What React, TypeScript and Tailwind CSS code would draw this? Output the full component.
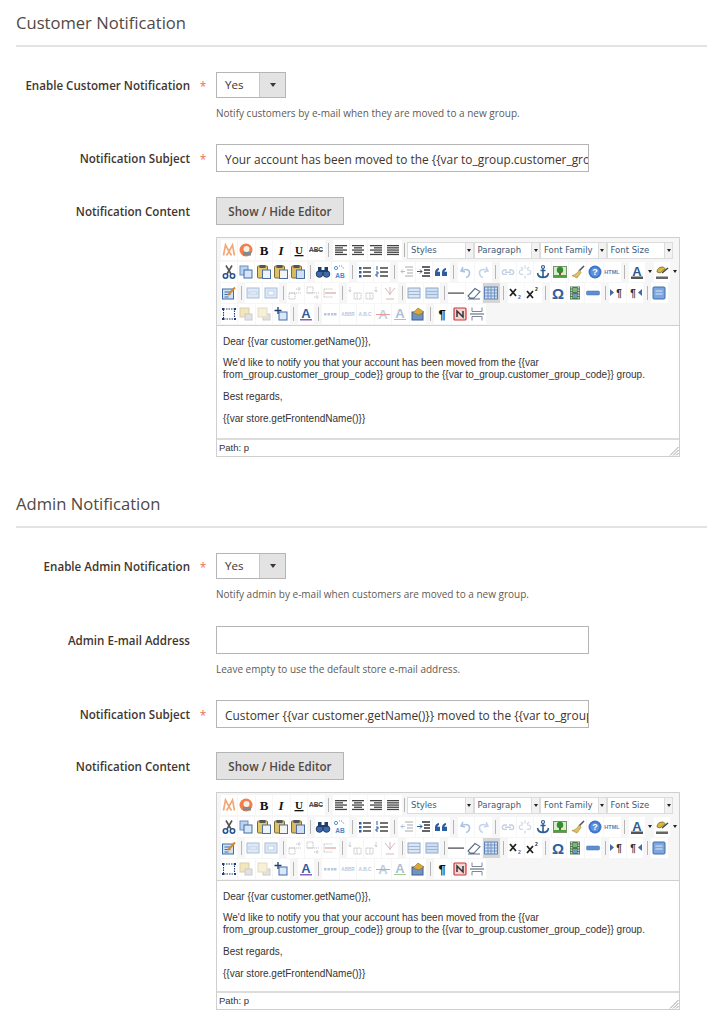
import type { ReactNode } from "react";

const sans = "font-['Open_Sans',sans-serif]";

function Lines({ rows, color = "#444" }: { rows: [number, number][]; color?: string }) {
	return (
		<>
			{rows.map(([x, w], i) => (
				<rect key={i} x={x} y={3 + i * 2.2} width={w} height={1.3} fill={color} />
			))}
		</>
	);
}

function Grid({ fill = "#dbe6f5", stroke = "#8fa9cc" }: { fill?: string; stroke?: string }) {
	return (
		<>
			<rect x="2" y="3" width="12" height="10" fill={fill} stroke={stroke} />
			<path d="M2.5 6.5h11M2.5 9.5h11" stroke={stroke} strokeWidth=".8" />
		</>
	);
}

function Txt({ s, size = 5, color = "#7d9cc4", y = 10, serif }: { s: string; size?: number; color?: string; y?: number; serif?: boolean }) {
	return (
		<text x="8" y={y} textAnchor="middle" fontSize={size} fontWeight="700" fontFamily={serif ? "'Liberation Serif',serif" : "'Liberation Sans',sans-serif"} fill={color}>
			{s}
		</text>
	);
}

function Page({ color = "#e8c96a", inner = "#eef3fb" }: { color?: string; inner?: string }) {
	return (
		<>
			<rect x="1.5" y="2" width="10" height="12" rx="1" fill={color} stroke="#7b6a35" />
			<rect x="3.5" y="1" width="6" height="3" fill="#555" />
			<rect x="6.5" y="6" width="8" height="8.5" fill={inner} stroke="#4d6f9f" />
		</>
	);
}

const rowArrows = "#b8b8b8";

const icons: Record<string, ReactNode> = {
	widget: <path d="M2.500 13.500 4.500 3 8 9.500 11.500 3l2 10.500M5.500 13.500 8 9.500l2.500 4" fill="none" stroke="#f2a878" strokeWidth="1.700" />,
	media: (
		<>
			<circle cx="8" cy="8" r="6.500" fill="#ef7f4d" />
			<circle cx="8.500" cy="7" r="3" fill="#f6f0ea" />
			<rect x="5" y="10" width="8" height="3.500" fill="#888" />
		</>
	),
	bold: <Txt s="B" size={13} color="#111" y={12.500} serif />,
	italic: (
		<text x="8" y="12.500" textAnchor="middle" fontSize="13" fontWeight="700" fontStyle="italic" fontFamily="'Liberation Serif',serif" fill="#111">
			I
		</text>
	),
	underline: (
		<>
			<text x="8" y="11.500" textAnchor="middle" fontSize="11" fontWeight="700" fontFamily="'Liberation Serif',serif" fill="#111">
				U
			</text>
			<rect x="3.500" y="13" width="9" height="1.300" fill="#111" />
		</>
	),
	strike: (
		<>
			<Txt s="ABC" size={6.500} color="#444" />
			<rect x="1" y="8" width="14" height=".8" fill="#555" />
		</>
	),
	left: <Lines rows={[[2, 12], [2, 8], [2, 12], [2, 8], [2, 12]]} />,
	center: <Lines rows={[[2, 12], [4, 8], [2, 12], [4, 8], [2, 12]]} />,
	right: <Lines rows={[[2, 12], [6, 8], [2, 12], [6, 8], [2, 12]]} />,
	justify: <Lines rows={[[2, 12], [2, 12], [2, 12], [2, 12], [2, 12]]} />,
	cut: (
		<>
			<path d="M5 1.500 10 10M11 1.500 6 10" stroke="#555" strokeWidth="1.600" />
			<circle cx="4.500" cy="12" r="2.200" fill="none" stroke="#25558f" strokeWidth="1.600" />
			<circle cx="11.500" cy="12" r="2.200" fill="none" stroke="#25558f" strokeWidth="1.600" />
		</>
	),
	copy: (
		<>
			<rect x="2" y="2" width="8" height="9" fill="#bcd2ef" stroke="#6b8fc0" />
			<rect x="6" y="6" width="8" height="8" fill="#d7e5f8" stroke="#3f6ea8" />
		</>
	),
	paste: <Page />,
	pastetext: <Page color="#dcc06a" inner="#f4f4f4" />,
	pasteword: <Page color="#d9b95c" inner="#cfe0f5" />,
	search: (
		<>
			<circle cx="4.500" cy="10" r="3.300" fill="#3f6aa6" stroke="#1d3e70" />
			<circle cx="11.500" cy="10" r="3.300" fill="#3f6aa6" stroke="#1d3e70" />
			<rect x="3" y="3" width="3.500" height="5" fill="#1d3e70" />
			<rect x="9.500" y="3" width="3.500" height="5" fill="#1d3e70" />
			<rect x="6" y="6" width="4" height="2" fill="#1d3e70" />
		</>
	),
	replace: (
		<>
			<circle cx="4" cy="4" r="1.600" fill="none" stroke="#5b92d0" />
			<path d="M7 2h3l2 3" fill="none" stroke="#5b92d0" strokeDasharray="1 1" />
			<Txt s="AB" size={6.500} color="#4a86c8" y={14} />
		</>
	),
	ul: (
		<>
			<path d="M2 3h2.500v2.500H2zM2 7h2.500v2.500H2zM2 11h2.500v2.500H2z" fill="#2b5d9f" />
			<path d="M6 4h8M6 8h8M6 12h8" stroke="#444" strokeWidth="1.300" />
		</>
	),
	ol: (
		<>
			<path d="M3 2v4M2 8h2v2H2v2h2" fill="none" stroke="#2b5d9f" strokeWidth="1" />
			<path d="M6 4h8M6 8h8M6 12h8" stroke="#444" strokeWidth="1.300" />
		</>
	),
	outdent: (
		<>
			<path d="M6 3h8M8 6h6M8 9h6M6 12h8" stroke="#aaa" strokeWidth="1.200" />
			<path d="M6 7.500H2M4 5.500l-2 2 2 2" fill="none" stroke="#aac0dc" />
		</>
	),
	indent: (
		<>
			<path d="M6 3h8M8 6h6M8 9h6M6 12h8" stroke="#333" strokeWidth="1.300" />
			<path d="M1 7.500h5M4 5.500l2 2-2 2" fill="none" stroke="#2b5d9f" />
		</>
	),
	quote: <path d="M2 8.500C2 6 3.500 4.500 6 4v2C5 6.300 4.500 7 4.500 7.800H7V12H2ZM9 8.500C9 6 10.500 4.500 13 4v2c-1 .3-1.500 1-1.500 1.800H14V12H9Z" fill="#2b5d9f" />,
	undo: <path d="M5 3 3 7l4 1M3.500 7C8 4 12 6 11.500 9.500 11.200 11.500 9.500 13 8 13.500" fill="none" stroke="#a9c3e6" strokeWidth="1.600" />,
	redo: <path d="M11 3l2 4-4 1M12.500 7C8 4 4 6 4.500 9.500 4.800 11.500 6.500 13 8 13.500" fill="none" stroke="#c3d4ec" strokeWidth="1.600" />,
	link: <path d="M7 6H4.500a2.200 2.200 0 0 0 0 4.400H7M9 6h2.500a2.200 2.200 0 0 1 0 4.400H9M5 8.200h6" fill="none" stroke="#c3d0e2" strokeWidth="1.400" />,
	unlink: <path d="M6 6H4.500a2.200 2.200 0 0 0 0 4.400H6M10 6h1.500a2.200 2.200 0 0 1 0 4.400H10M8 1.500v3M8 11.500v3M4 3l2 2M12 3l-2 2" fill="none" stroke="#cfd7e2" strokeWidth="1.200" />,
	anchor: (
		<>
			<circle cx="8" cy="3" r="1.500" fill="none" stroke="#2f5f92" strokeWidth="1.200" />
			<path d="M8 4.500V13M5.500 6.500h5M2.500 9c.5 3 3 4.500 5.500 4.500S13 12 13.500 9" fill="none" stroke="#2f5f92" strokeWidth="1.600" />
		</>
	),
	image: (
		<>
			<rect x="1.500" y="2.500" width="13" height="11" fill="#d8ecd0" stroke="#7a8f6a" />
			<circle cx="8" cy="6" r="3.200" fill="#2f8f2f" />
			<rect x="7" y="8" width="2" height="3" fill="#7a5a2a" />
			<rect x="2" y="11" width="12" height="2" fill="#4aa03a" />
		</>
	),
	cleanup: (
		<>
			<path d="M9 7 14 2" stroke="#555" strokeWidth="1.600" />
			<path d="M9.500 6 11 8.500 7 14 2 11.500c3 0 5-2.500 7.500-5.500Z" fill="#e0c060" stroke="#9a8030" strokeWidth=".6" />
		</>
	),
	help: (
		<>
			<circle cx="8" cy="8" r="6.500" fill="#3f74c8" />
			<circle cx="8" cy="8" r="4.500" fill="#5d93de" />
			<Txt s="?" size={9} color="#fff" y={11.200} />
		</>
	),
	html: <Txt s="HTML" size={5.500} color="#5d7fb0" />,
	fore: (
		<>
			<Txt s="A" size={13} color="#2f5a8f" y={11.500} />
			<rect x="2" y="12.500" width="12" height="2.500" fill="#555" />
		</>
	),
	back: (
		<>
			<path d="M3 8c0-3 2-5 5-5 2 0 3 1 3 2L6 9Z" fill="#d9b93a" stroke="#6b5a20" strokeWidth=".7" />
			<path d="M8 9l6-5" stroke="#444" strokeWidth="1.500" />
			<rect x="2" y="12.500" width="12" height="2.500" fill="#666" />
		</>
	),
	edit: (
		<>
			<rect x="1.500" y="4" width="11" height="10" fill="#cfe0f5" stroke="#3f6ea8" />
			<path d="M3.500 7h6M3.500 9.500h6M3.500 12h4" stroke="#3f6ea8" />
			<path d="M7 10 14 2.500" stroke="#d08a30" strokeWidth="2" />
		</>
	),
	row: (
		<>
			<rect x="2" y="3" width="12" height="10" fill="#dfe9f6" stroke="#a8bedb" />
			<rect x="4" y="7" width="8" height="2" fill="#f5f8fc" stroke="#a8bedb" strokeWidth=".6" />
		</>
	),
	cell: (
		<>
			<rect x="2" y="3" width="12" height="10" fill="#dfe9f6" stroke="#a8bedb" />
			<rect x="5" y="6" width="6" height="4" fill="#f5f8fc" stroke="#a8bedb" strokeWidth=".6" />
		</>
	),
	rowbefore: <path d="M2 8h6v6H2zM2 8h12M9 4h5M12 2v4" fill="none" stroke={rowArrows} strokeWidth=".8" strokeDasharray="1.500 .7" />,
	rowafter: <path d="M2 2h6v6H2zM2 8h12M9 12h5M12 10v4" fill="none" stroke={rowArrows} strokeWidth=".8" strokeDasharray="1.500 .7" />,
	rowdel: (
		<>
			<path d="M2 4h9M2 12h9M2 4v8" fill="none" stroke={rowArrows} strokeWidth=".8" strokeDasharray="1.500 .7" />
			<path d="M3 8h11" stroke="#e2a9a9" strokeWidth="1.300" />
		</>
	),
	colbefore: <path d="M7 8v6h7V8zM10 8v6M3 2v5M1.500 5 3 7l1.500-2" fill="none" stroke={rowArrows} strokeWidth=".8" strokeDasharray="1.500 .7" />,
	colafter: <path d="M2 8v6h7V8zM6 8v6M12 2v5M10.500 5 12 7l1.500-2" fill="none" stroke={rowArrows} strokeWidth=".8" strokeDasharray="1.500 .7" />,
	coldel: <path d="M8 2v8M3 3l5 6 5-6M4 14h8" fill="none" stroke="#d8b8b8" strokeWidth="1" />,
	split: <Grid />,
	merge: <Grid fill="#cfdff3" />,
	hr: <rect x="0" y="7.500" width="16" height="1.200" fill="#444" />,
	eraser: <path d="M2 11 9 3.500l5 3-6 6.500H4Zm0 3h12" fill="none" stroke="#5d6f88" strokeWidth="1.100" />,
	table: (
		<>
			<rect x="1.500" y="2" width="13" height="12" fill="#cfe0f5" stroke="#5f84b8" />
			<path d="M1.500 5h13M1.500 8h13M1.500 11h13M5 2v12M8 2v12M11.500 2v12" stroke="#5f84b8" strokeWidth=".8" />
		</>
	),
	sub: (
		<>
			<path d="M2 4l6 7M8 4l-6 7" stroke="#222" strokeWidth="1.800" />
			<text x="10" y="14" fontSize="5" fontWeight="700" fill="#3f6aa6" fontFamily="'Liberation Sans',sans-serif">
				2
			</text>
		</>
	),
	sup: (
		<>
			<path d="M2 6l6 7M8 6l-6 7" stroke="#222" strokeWidth="1.800" />
			<text x="10" y="6" fontSize="5" fontWeight="700" fill="#222" fontFamily="'Liberation Sans',sans-serif">
				2
			</text>
		</>
	),
	omega: <Txt s="Ω" size={15} color="#2f5f9f" y={13.500} />,
	film: (
		<>
			<rect x="3" y="1.500" width="10" height="13" fill="#4a7a4a" />
			<path d="M4.500 2v12M11.500 2v12" stroke="#ccc" strokeWidth="1.600" strokeDasharray="1.500 1" />
			<rect x="6" y="3" width="4" height="4" fill="#7fb27f" />
			<rect x="6" y="9" width="4" height="4" fill="#6a9ac8" />
		</>
	),
	rule: <rect x="1.500" y="6" width="13" height="4" rx="1" fill="#5f8fd0" stroke="#3f6ea8" strokeWidth=".5" />,
	ltr: (
		<>
			<path d="M1 4l4 3.500-4 3.500Z" fill="#3f6aa6" />
			<text x="10" y="11.500" textAnchor="middle" fontSize="10" fontWeight="700" fontFamily="'Liberation Sans',sans-serif" fill="#333">
				¶
			</text>
		</>
	),
	rtl: (
		<>
			<text x="6" y="11.500" textAnchor="middle" fontSize="10" fontWeight="700" fontFamily="'Liberation Sans',sans-serif" fill="#333">
				¶
			</text>
			<path d="M15 4l-4 3.500 4 3.500Z" fill="#3f6aa6" />
		</>
	),
	full: (
		<>
			<rect x="2" y="2" width="12" height="12" rx="1" fill="#7ea6de" stroke="#3f6ea8" />
			<path d="M4.500 6h7M4.500 9h7" stroke="#dce8f7" />
		</>
	),
	layer: (
		<>
			<rect x="2.500" y="3" width="11" height="10" fill="none" stroke="#1e3f6f" strokeDasharray="1.500 1" strokeWidth="1.100" />
			<path d="M1 2h2v2H1zM13 2h2v2h-2zM1 12h2v2H1zM13 12h2v2h-2z" fill="#1e3f6f" />
		</>
	),
	forward: (
		<>
			<rect x="2" y="2" width="9" height="9" fill="#f2e6bd" stroke="#d9cfa8" />
			<rect x="7" y="8" width="7" height="6" fill="#e2e2e2" stroke="#ccc" />
		</>
	),
	backward: (
		<>
			<rect x="7" y="8" width="7" height="6" fill="#e2e2e2" stroke="#ccc" />
			<rect x="2" y="2" width="9" height="9" fill="#f7efd6" stroke="#e3dbc0" />
		</>
	),
	absolute: (
		<>
			<rect x="6" y="6" width="8" height="8" fill="#dce8f7" stroke="#3f6ea8" />
			<path d="M5 1v7M1.500 4.500h7" stroke="#1e3f6f" strokeWidth="1.300" />
		</>
	),
	styleprops: (
		<>
			<Txt s="A" size={13} color="#2f5f9f" y={12} />
			<rect x="2" y="13" width="12" height="1.500" fill="#8a5fb8" />
		</>
	),
	cite: <path d="M2 7h2.500v2.500H2zM5.500 7H8v2.500H5.500zM9 7h2.500v2.500H9zM12 7h2.500v2.500H12z" fill="#b7c8de" />,
	abbr: <Txt s="ABBR" size={4.600} color="#b7c8de" />,
	acronym: <Txt s="A.B.C" size={4.800} color="#b7c8de" />,
	del: (
		<>
			<Txt s="A" size={13} color="#c3cfdf" y={12.500} />
			<rect x="1" y="8" width="14" height="1" fill="#e59a9a" />
		</>
	),
	ins: (
		<>
			<Txt s="A" size={13} color="#aebfd6" y={12} />
			<rect x="2" y="13" width="12" height="1" fill="#9ecf8f" />
		</>
	),
	attribs: (
		<>
			<rect x="2" y="6" width="11" height="8" fill="#6f93c4" stroke="#3f5f90" />
			<path d="M3 7 8 2l6 4-5 3Z" fill="#d9a93a" stroke="#8a6a20" strokeWidth=".6" />
		</>
	),
	pilcrow: <Txt s="¶" size={13} color="#111" y={12.500} />,
	nbsp: (
		<>
			<rect x="2" y="2" width="12" height="12" rx="1" fill="#f6d4d4" stroke="#c33" strokeWidth="1.200" />
			<path d="M5 11V5l6 6V5" fill="none" stroke="#333" strokeWidth="1.500" />
		</>
	),
	pagebreak: (
		<>
			<path d="M3 1.500v4h10v-4M3 14.500v-4h10v4" fill="none" stroke="#7d8896" />
			<path d="M1 8h14" stroke="#7d8896" strokeWidth="1.400" />
		</>
	),
};

const rows: string[][] = [
	["widget", "media", "bold", "italic", "underline", "strike", "|", "left", "center", "right", "justify", "!"],
	["cut", "copy", "paste", "pastetext", "pasteword", "|", "search", "replace", "|", "ul", "ol", "|", "outdent", "indent", "quote", "|", "undo", "redo", "|", "link", "unlink", "anchor", "image", "cleanup", "help", "html", "|", "fore", ">", "back", ">"],
	["edit", "|", "row", "cell", "|", "rowbefore", "rowafter", "rowdel", "|", "colbefore", "colafter", "coldel", "|", "split", "merge", "|", "hr", "eraser", "table", "|", "sub", "sup", "|", "omega", "film", "rule", "|", "ltr", "rtl", "|", "full"],
	["layer", "forward", "backward", "absolute", "|", "styleprops", "|", "cite", "abbr", "acronym", "del", "ins", "attribs", "|", "pilcrow", "nbsp", "pagebreak"],
];

function ToolIcon({ name }: { name: string }) {
	if (name === "|" || name === "!") {
		return (
			<span className={`flex h-full items-center justify-center ${name === "!" ? "w-[5px]" : "w-[7px]"}`}>
				<span className="h-[14px] w-px bg-[#b5b5b5]" />
			</span>
		);
	}
	if (name === ">") {
		return (
			<span className="flex h-full w-[8px] items-center justify-center">
				<span className="h-0 w-0 border-x-[2.5px] border-t-[3px] border-x-transparent border-t-[#222]" />
			</span>
		);
	}
	return (
		<span className="flex h-full w-[17.5px] items-center justify-center">
			<span className={`flex h-[20px] w-[16.5px] items-center justify-center ${name === "table" ? "bg-[#d6d6d6]" : "bg-white"}`}>
				<svg viewBox="0 0 16 16" className="h-[16px] w-[16px]">
					{icons[name]}
				</svg>
			</span>
		</span>
	);
}

function ToolSelect({ label }: { label: string }) {
	return (
		<span className="flex h-[17px] w-[66.5px] items-stretch">
			<span className="flex w-[58.5px] items-center border border-[#dcdcdc] bg-white pl-[3px] font-['DejaVu_Sans',sans-serif] text-[8.5px] text-[#3d5a78]">{label}</span>
			<span className="flex w-[8px] items-center justify-center border-y border-r border-[#dcdcdc] bg-[#f2f2f2]">
				<span className="h-0 w-0 border-x-[2.5px] border-t-[3px] border-x-transparent border-t-[#222]" />
			</span>
		</span>
	);
}

function Editor({ height }: { height: string }) {
	return (
		<div className={`mt-3 flex w-[464px] flex-col border border-[#cfcfcf] bg-white ${height}`}>
			<div className="flex h-[88px] flex-col border-b border-[#d0d0d0] bg-[#f6f6f6] pt-[1.5px] pl-[3px]">
				{rows.map((row, i) => (
					<div key={i} className="flex h-[21.5px] items-center">
						{row.map((name, j) => (
							<ToolIcon key={j} name={name} />
						))}
						{i === 0 && (
							<>
								<ToolSelect label="Styles" />
								<ToolSelect label="Paragraph" />
								<ToolSelect label="Font Family" />
								<ToolSelect label="Font Size" />
							</>
						)}
					</div>
				))}
			</div>
			<div className="flex-1 px-[6px] pt-[10px] font-['Liberation_Sans',sans-serif] text-[10px] leading-[12px] text-[#333]">
				<p className="mb-[8.5px]">{"Dear {{var customer.getName()}},"}</p>
				<p className="mb-[10.5px]">
					{"We'd like to notify you that your account has been moved from the {{var"}
					<br />
					{"from_group.customer_group_code}} group to the {{var to_group.customer_group_code}} group."}
				</p>
				<p className="mb-[9.5px]">Best regards,</p>
				<p>{"{{var store.getFrontendName()}}"}</p>
			</div>
			<div className="relative flex h-[18px] items-center border-t-2 border-[#dcdcdc] pl-[2px] font-['Liberation_Sans',sans-serif] text-[9.5px] text-[#333]">
				Path: p
				<svg viewBox="0 0 10 10" className="absolute right-0 bottom-0 h-[10px] w-[10px]">
					<path d="M9.500 1 1 9.500M9.500 4 4 9.500M9.500 7 7 9.500" stroke="#888" strokeWidth=".8" />
				</svg>
			</div>
		</div>
	);
}

function Label({ text, required }: { text: string; required?: boolean }) {
	return (
		<div className="flex w-[200px] shrink-0 items-center justify-end pt-px">
			<span className="text-[11.6px] font-semibold text-[#41362f]">{text}</span>
			<span className={`w-[26px] pt-[3px] text-center text-[12px] text-[#e8734a] ${required ? "" : "invisible"}`}>*</span>
		</div>
	);
}

function Section({ title, children }: { title: string; children: ReactNode }) {
	return (
		<section className="pl-4">
			<h2 className="flex h-[47px] items-center border-b-2 border-[#e3e3e3] pt-[2px] text-[16.6px] font-normal text-[#514943]">{title}</h2>
			{children}
		</section>
	);
}

function SelectRow({ label, hint, top }: { label: string; hint: string; top: string }) {
	return (
		<div className={top}>
			<div className="flex h-[26px]">
				<Label text={label} required />
				<div className="flex h-[26px] w-[70px] border border-[#b5b5b5]">
					<span className="flex w-[42px] items-center bg-white pl-2 text-[11.6px] text-[#41362f]">Yes</span>
					<span className="flex flex-1 items-center justify-center border-l border-[#c8c8c8] bg-[#e3e3e3]">
						<span className="h-0 w-0 border-x-[3.5px] border-t-[4px] border-x-transparent border-t-[#41362f]" />
					</span>
				</div>
			</div>
			<Hint text={hint} />
		</div>
	);
}

function Hint({ text }: { text: string }) {
	return <p className="mt-[8px] ml-[200px] text-[10px] leading-[14px] text-[#5f5a55]">{text}</p>;
}

function InputRow({ label, value, required, top }: { label: string; value: string; required?: boolean; top: string }) {
	return (
		<div className={`flex h-[28px] ${top}`}>
			<Label text={label} required={required} />
			<input readOnly value={value} className="h-[28px] w-[373px] border border-[#b5b5b5] bg-white pt-px pl-2 text-[11.9px] text-[#41362f]" />
		</div>
	);
}

function ContentRow({ top, height }: { top: string; height: string }) {
	return (
		<div className={top}>
			<div className="flex h-[28px]">
				<Label text="Notification Content" />
				<span className="flex h-[28px] w-[128px] items-center justify-center border border-[#b5b5b5] bg-[#e3e3e3] pt-px text-[11.6px] font-semibold text-[#514943]">Show / Hide Editor</span>
			</div>
			<div className="ml-[200px]">
				<Editor height={height} />
			</div>
		</div>
	);
}

export default function App() {
	return (
		<div className={`h-[1024px] w-[707px] overflow-hidden bg-white ${sans}`}>
			<Section title="Customer Notification">
				<SelectRow top="mt-[25px]" label="Enable Customer Notification" hint="Notify customers by e-mail when they are moved to a new group." />
				<InputRow top="mt-[24px]" label="Notification Subject" required value="Your account has been moved to the {{var to_group.customer_group_code}} group" />
				<ContentRow top="mt-[25px]" height="h-[220px]" />
			</Section>
			<div className="h-[24px]" />
			<Section title="Admin Notification">
				<SelectRow top="mt-[25px]" label="Enable Admin Notification" hint="Notify admin by e-mail when customers are moved to a new group." />
				<InputRow top="mt-[25px]" label="Admin E-mail Address" value="" />
				<Hint text="Leave empty to use the default store e-mail address." />
				<InputRow top="mt-[24px]" label="Notification Subject" required value="Customer {{var customer.getName()}} moved to the {{var to_group.customer_group_code}} group" />
				<ContentRow top="mt-[24px]" height="h-[218px]" />
			</Section>
		</div>
	);
}
